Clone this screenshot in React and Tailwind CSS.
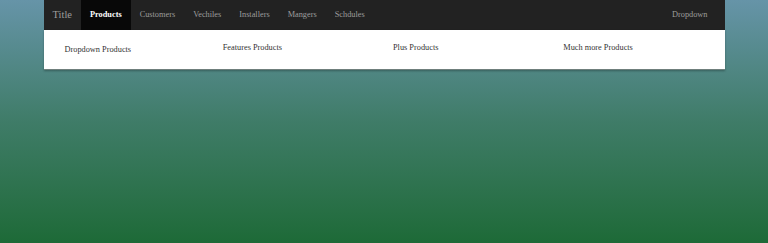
import React from 'react'

const links = ['Customers', 'Vechiles', 'Installers', 'Mangers', 'Schdules']

function Navbar() {
  return (
    <div className="flex h-[30px] items-stretch bg-[#222222] text-[8.3px]">
      <span className="flex items-center pl-[9px] pr-[9px] text-[10.5px] text-[#9d9d9d]">Title</span>
      <span className="flex items-center bg-[#080808] px-[9px] font-bold text-white">Products</span>
      {links.map((l) => (
        <span key={l} className="flex items-center px-[9px] text-[#9d9d9d]">{l}</span>
      ))}
      <span className="ml-auto flex items-center pr-[17px] text-[#9d9d9d]">Dropdown</span>
    </div>
  )
}

function Panel() {
  return (
    <div className="grid h-[40px] grid-cols-4 border-b border-[#6f7f7c] bg-white text-[8.3px] text-[#333333] shadow-[0_1px_2px_rgba(0,0,0,0.3)]">
      <div className="pl-[21px] pt-[14px]">Dropdown Products</div>
      <div className="pl-[9px] pt-[12px]">Features Products</div>
      <div className="pl-[9px] pt-[12px]">Plus Products</div>
      <div className="pl-[9px] pt-[12px]">Much more Products</div>
    </div>
  )
}

export default function App() {
  return (
    <div
      className="h-[243px] w-full bg-gradient-to-b from-[#6694a8] via-[#3f7c68] to-[#1d6a37]"
      style={{ fontFamily: '"Liberation Serif", "Times New Roman", serif' }}
    >
      <div className="mx-auto w-[681px]">
        <Navbar />
        <Panel />
      </div>
    </div>
  )
}
